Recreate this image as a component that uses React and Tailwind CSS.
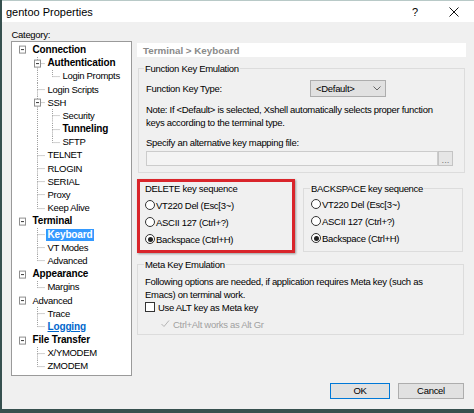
import React from "react";

const TREE = [
  { t: "Connection", d: 0, b: true, kids: true },
  { t: "Authentication", d: 1, b: true, kids: true },
  { t: "Login Prompts", d: 2 },
  { t: "Login Scripts", d: 1 },
  { t: "SSH", d: 1, kids: true },
  { t: "Security", d: 2 },
  { t: "Tunneling", d: 2, b: true },
  { t: "SFTP", d: 2 },
  { t: "TELNET", d: 1 },
  { t: "RLOGIN", d: 1 },
  { t: "SERIAL", d: 1 },
  { t: "Proxy", d: 1 },
  { t: "Keep Alive", d: 1 },
  { t: "Terminal", d: 0, b: true, kids: true },
  { t: "Keyboard", d: 1, b: true, sel: true },
  { t: "VT Modes", d: 1 },
  { t: "Advanced", d: 1 },
  { t: "Appearance", d: 0, b: true, kids: true },
  { t: "Margins", d: 1 },
  { t: "Advanced", d: 0, kids: true },
  { t: "Trace", d: 1 },
  { t: "Logging", d: 1, b: true, link: true },
  { t: "File Transfer", d: 0, b: true, kids: true },
  { t: "X/YMODEM", d: 1 },
  { t: "ZMODEM", d: 1 },
];

function hasNext(i) {
  const d = TREE[i].d;
  for (let j = i + 1; j < TREE.length; j++) {
    if (TREE[j].d < d) return false;
    if (TREE[j].d === d) return true;
  }
  return false;
}

function ancestorIndex(i, depth) {
  for (let j = i - 1; j >= 0; j--) {
    if (TREE[j].d === depth) return j;
  }
  return -1;
}

const LINE = "#a0a0a0";

function Cell({ i, k }) {
  const item = TREE[i];
  const H = 13.2;
  const c = 7.5;
  const m = H / 2;
  const parts = [];
  if (k < item.d) {
    if (k >= 1) {
      const a = ancestorIndex(i, k);
      if (a >= 0 && hasNext(a)) {
        parts.push(<line key="v" x1={c} y1={0} x2={c} y2={H} stroke={LINE} strokeDasharray="1 1" />);
      }
    }
  } else if (k === item.d) {
    if (item.d >= 1) {
      parts.push(<line key="t" x1={c} y1={0} x2={c} y2={m} stroke={LINE} strokeDasharray="1 1" />);
      if (hasNext(i)) {
        parts.push(<line key="b" x1={c} y1={m} x2={c} y2={H} stroke={LINE} strokeDasharray="1 1" />);
      }
      parts.push(<line key="h" x1={c} y1={m} x2={15} y2={m} stroke={LINE} strokeDasharray="1 1" />);
    }
    if (item.kids) {
      parts.push(<rect key="r" x={4.5} y={m - 3.5} width={6} height={7} fill="#fff" stroke="#8f8f8f" />);
      parts.push(<line key="mn" x1={6} y1={m} x2={9} y2={m} stroke="#333" />);
    }
  }
  return (
    <svg width="15" height="13.2" viewBox="0 0 15 13.2" className="shrink-0 block">
      {parts}
    </svg>
  );
}

function Tree() {
  return (
    <div className="w-[121px] h-[335px] border border-[#9a9a9a] bg-white pl-[3px] pt-[1.4px] overflow-hidden">
      {TREE.map((item, i) => {
        const cols = [];
        for (let k = 0; k <= item.d; k++) cols.push(<Cell key={k} i={i} k={k} />);
        let cls = "ml-[1px] px-[1.5px] h-[12px] leading-[12px] whitespace-nowrap ";
        if (item.b) cls += "font-bold text-[10px] tracking-[-0.15px] ";
        else cls += "text-[9.5px] tracking-[-0.3px] ";
        if (item.sel) cls += "bg-[#3399ff] text-white ";
        else if (item.link) cls += "text-[#0066cc] underline ";
        else cls += "text-black ";
        return (
          <div key={i} className="flex h-[13.2px] items-center">
            {cols}
            <span className={cls}>{item.t}</span>
          </div>
        );
      })}
    </div>
  );
}

function Radio({ checked, label }) {
  return (
    <div className="flex h-[17px] items-center">
      <span className="w-[10px] h-[10px] rounded-full border border-[#333333] bg-white flex items-center justify-center shrink-0">
        {checked && <span className="w-[5px] h-[5px] rounded-full bg-[#222222]" />}
      </span>
      <span className="ml-[1px] whitespace-nowrap">{label}</span>
    </div>
  );
}

function Radios() {
  return (
    <>
      <Radio label="VT220 Del (Esc[3~)" />
      <Radio label="ASCII 127 (Ctrl+?)" />
      <Radio checked label="Backspace (Ctrl+H)" />
    </>
  );
}

export default function App() {
  return (
    <div className="w-[474px] h-[413px] bg-[#36504f] pl-[2px] overflow-hidden font-['Liberation_Sans',Arial,sans-serif] text-[9.5px] tracking-[-0.3px] leading-[13px] text-black">
      <div className="w-[472px] h-[409px] bg-[#f0f0f0] flex flex-col">
        {/* Title bar */}
        <div className="h-[22px] bg-white flex items-center pl-[4px] shrink-0 border-t border-[#b8c9c7] tracking-normal">
          <span className="text-[11px] leading-[14px] whitespace-nowrap">gentoo Properties</span>
          <span className="ml-auto text-[11px] leading-[14px]">?</span>
          <span className="ml-[31px] mr-[15px]">
            <svg width="10" height="10" viewBox="0 0 10 10" className="block">
              <line x1="0.5" y1="0.5" x2="9.5" y2="9.5" stroke="#111" strokeWidth="1" />
              <line x1="9.5" y1="0.5" x2="0.5" y2="9.5" stroke="#111" strokeWidth="1" />
            </svg>
          </span>
        </div>

        {/* Body */}
        <div className="pl-[9.5px] mt-[5.5px] h-[13px] whitespace-nowrap">Category:</div>
        <div className="flex pl-[9px] mt-[0.5px]">
          <Tree />
          <div className="ml-[5px] w-[329px] mt-[2px] flex flex-col">
            <div className="h-[14px] bg-white flex items-center pl-[6px] text-[9.8px] tracking-normal font-bold text-[#8a8a8a] whitespace-nowrap">
              Terminal &gt; Keyboard
            </div>

            {/* Function Key Emulation */}
            <fieldset className="mt-[4.5px] ml-[1px] mr-[1px] border border-[#dcdcdc] px-[7px] pb-[6px]">
              <legend className="ml-[-2px] px-[1px] leading-[13px] whitespace-nowrap">Function Key Emulation</legend>
              <div className="mt-[5.5px] flex items-center h-[17px]">
                <span className="w-[164px] whitespace-nowrap">Function Key Type:</span>
                <div className="w-[76px] h-[17px] bg-[#e1e1e1] border border-[#adadad] flex items-center pl-[5px]">
                  <span className="whitespace-nowrap">&lt;Default&gt;</span>
                  <svg width="8" height="5" viewBox="0 0 8 5" className="ml-auto mr-[4px] block">
                    <polyline points="0.5,0.5 4,4 7.5,0.5" fill="none" stroke="#666" strokeWidth="1" />
                  </svg>
                </div>
              </div>
              <div className="mt-[5.5px] leading-[13px]">
                <div className="whitespace-nowrap">Note: If &lt;Default&gt; is selected, Xshell automatically selects proper function</div>
                <div className="whitespace-nowrap">keys according to the terminal type.</div>
              </div>
              <div className="mt-[7px] whitespace-nowrap">Specify an alternative key mapping file:</div>
              <div className="mt-[2.5px] flex h-[15px]">
                <div className="w-[292px] h-[15px] bg-[#f4f4f4] border border-[#cccccc]" />
                <div className="w-[15px] h-[15px] bg-[#e6e6e6] border border-[#c4c4c4] flex items-end justify-center text-[#7a7a7a] leading-[11px] tracking-normal">
                  ...
                </div>
              </div>
            </fieldset>

            {/* Key sequences */}
            <div className="mt-[6px] flex items-start">
              <div className="w-[158px] h-[74px] border-[3px] border-[#d9252b] shadow-[1px_1px_2px_rgba(0,0,0,0.35)] pl-[5px] shrink-0">
                <div className="mt-[-0.5px] h-[13px] whitespace-nowrap">DELETE key sequence</div>
                <div className="mt-[2px]">
                  <Radios />
                </div>
              </div>
              <fieldset className="ml-[8px] mt-[2.5px] flex-1 mr-[3px] border border-[#dcdcdc] px-[7px] pb-[4px]">
                <legend className="ml-[-1px] px-[1px] leading-[13px] whitespace-nowrap">BACKSPACE key sequence</legend>
                <div className="mt-[1px]">
                  <Radios />
                </div>
              </fieldset>
            </div>

            {/* Meta Key Emulation */}
            <fieldset className="mt-[4.5px] mr-[2px] border border-[#dcdcdc] px-[7px] pb-[3.5px]">
              <legend className="ml-[-1px] px-[1px] leading-[13px] whitespace-nowrap">Meta Key Emulation</legend>
              <div className="mt-[4px] leading-[13px]">
                <div className="whitespace-nowrap">Following options are needed, if application requires Meta key (such as</div>
                <div className="whitespace-nowrap">Emacs) on terminal work.</div>
              </div>
              <div className="flex items-center h-[13px]">
                <span className="w-[10px] h-[10px] border border-[#333333] bg-white shrink-0" />
                <span className="ml-[3px] whitespace-nowrap">Use ALT key as Meta key</span>
              </div>
              <div className="mt-[4px] flex items-center h-[13px] pl-[15px]">
                <svg width="10" height="10" viewBox="0 0 10 10" className="block shrink-0">
                  <polyline points="1.5,5 4,7.5 9,1.5" fill="none" stroke="#b5b5b5" strokeWidth="1" />
                </svg>
                <span className="ml-[3px] whitespace-nowrap text-[#a0a0a0]">Ctrl+Alt works as Alt Gr</span>
              </div>
            </fieldset>
          </div>
        </div>

        {/* Buttons */}
        <div className="mt-[7px] flex justify-end pr-[10px] gap-[8px]">
          <button className="w-[60px] h-[16px] bg-[#e1e1e1] border border-[#0078d7] leading-[14px] text-[9.5px]">OK</button>
          <button className="w-[66px] h-[16px] bg-[#e1e1e1] border border-[#adadad] leading-[14px] text-[9.5px]">Cancel</button>
        </div>
      </div>
    </div>
  );
}
